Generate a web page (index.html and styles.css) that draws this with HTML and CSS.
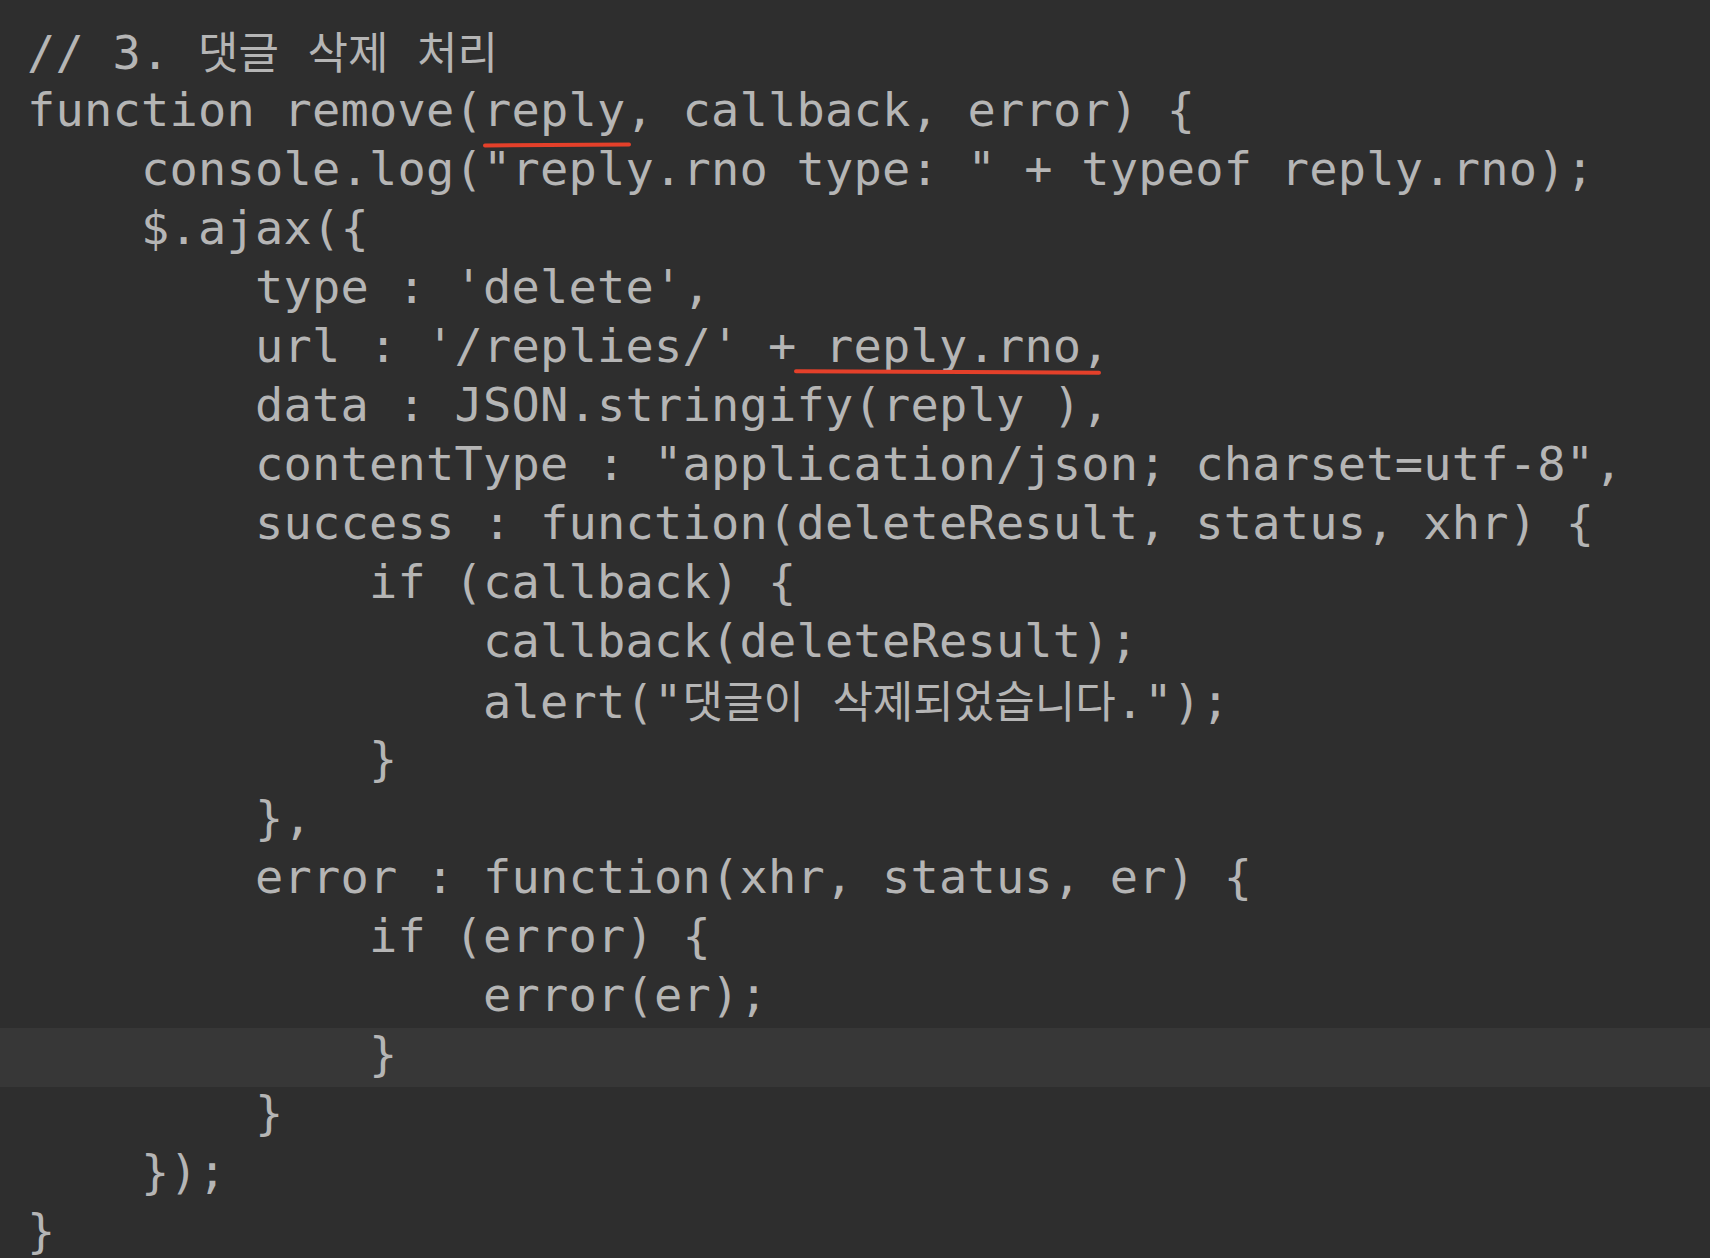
FILE: index.html
```html
<!DOCTYPE html>
<html lang="ko">
<head>
<meta charset="utf-8">
<title>remove</title>
<link rel="stylesheet" href="styles.css">
</head>
<body>
<div class="editor">
<div class="line">// 3. <span class="ko">댓글</span> <span class="ko">삭제</span> <span class="ko">처리</span></div>
<div class="line">function remove(<span class="mark mark-a">reply</span>, callback, error) {</div>
<div class="line">    console.log("reply.rno type: " + typeof reply.rno);</div>
<div class="line">    $.ajax({</div>
<div class="line">        type : 'delete',</div>
<div class="line">        url : '/replies/' +<span class="mark mark-b"> reply.rno,</span></div>
<div class="line">        data : JSON.stringify(reply ),</div>
<div class="line">        contentType : "application/json; charset=utf-8",</div>
<div class="line">        success : function(deleteResult, status, xhr) {</div>
<div class="line">            if (callback) {</div>
<div class="line">                callback(deleteResult);</div>
<div class="line">                alert("<span class="ko">댓글이</span> <span class="ko">삭제되었습니다</span>.");</div>
<div class="line">            }</div>
<div class="line">        },</div>
<div class="line">        error : function(xhr, status, er) {</div>
<div class="line">            if (error) {</div>
<div class="line">                error(er);</div>
<div class="line current">            }</div>
<div class="line">        }</div>
<div class="line">    });</div>
<div class="line">}</div>
</div>
</body>
</html>
```
FILE: styles.css
```css
html, body {
  margin: 0;
  padding: 0;
  background: #2e2e2e;
}

body {
  width: 1710px;
  height: 1258px;
  overflow: hidden;
}

.editor {
  padding-top: 25px;
  font-family: "DejaVu Sans Mono", "Noto Sans CJK KR", monospace;
  font-size: 47px;
  letter-spacing: 0.2px;
  line-height: 51px;
  color: #b5b5b5;
}

.line {
  height: 59px;
  padding-left: 27px;
  white-space: pre;
}

.line.current {
  background: #373737;
}

.ko {
  font-family: "Noto Sans CJK KR", "DejaVu Sans", sans-serif;
  font-size: 44px;
  letter-spacing: 0;
}

.mark {
  position: relative;
}

.mark::after {
  content: "";
  position: absolute;
  height: 4px;
  border-radius: 2px;
  background: #e4402a;
}

.mark-a::after {
  left: 0;
  right: -6px;
  bottom: -10px;
  transform: rotate(-0.4deg);
}

.mark-b::after {
  left: -2px;
  right: 8px;
  bottom: -1px;
  transform: rotate(0.3deg);
}
```
